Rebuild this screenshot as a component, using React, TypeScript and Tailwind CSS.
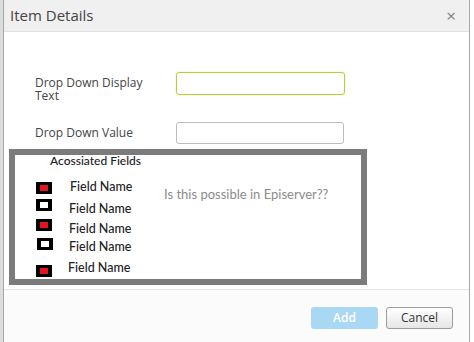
import React from 'react';

interface FieldRow {
  checked: boolean;
  iconTop: string;
  iconLeft: string;
  textTop: string;
  textLeft: string;
}

const rows: FieldRow[] = [
  { checked: true, iconTop: 'mt-[15px]', iconLeft: 'ml-[21px]', textTop: 'mt-[12px]', textLeft: 'ml-[18px]' },
  { checked: false, iconTop: 'mt-[5px]', iconLeft: 'ml-[21px]', textTop: 'mt-[6px]', textLeft: 'ml-[17px]' },
  { checked: true, iconTop: 'mt-[8px]', iconLeft: 'ml-[21px]', textTop: 'mt-[4px]', textLeft: 'ml-[17px]' },
  { checked: false, iconTop: 'mt-[7px]', iconLeft: 'ml-[22px]', textTop: 'mt-[2px]', textLeft: 'ml-[17px]' },
  { checked: true, iconTop: 'mt-[15px]', iconLeft: 'ml-[21px]', textTop: 'mt-[5px]', textLeft: 'ml-[16px]' },
];

function Box({ checked }: { checked: boolean }) {
  return (
    <div className="w-[16px] h-[12px] bg-black flex items-center justify-center">
      <div className={`w-[8px] h-[6px] ${checked ? 'bg-[#e2141e]' : 'bg-white'}`} />
    </div>
  );
}

export default function App() {
  return (
    <div className="w-[474px] h-[342px] flex bg-white overflow-hidden font-['Open_Sans',sans-serif]">
      <div className="w-[3px] bg-[#dcdcdc]" />
      <div className="flex-1 flex flex-col border-l border-r border-[#a8a8a8] bg-white">
        {/* header */}
        <div className="h-[32px] bg-[#f0f0f0] border-b border-[#e3e3e3] flex items-center justify-between pl-[6px] pr-[13px]">
          <span className="text-[15px] text-[#444]">Item Details</span>
          <span className="text-[17px] leading-none text-[#808080]">×</span>
        </div>

        {/* form */}
        <div className="pl-[31px] pt-[40px] text-[12px] text-[#444]">
          <div className="flex items-start">
            <div className="w-[141px] pt-[4px] pr-[30px] leading-[13px]">Drop Down Display Text</div>
            <div className="w-[169px] h-[23px] rounded-[3px] border border-[#b3d132] shadow-[0_0_2px_#e4ee9f]" />
          </div>
          <div className="flex items-center mt-[20px]">
            <div className="w-[141px]">Drop Down Value</div>
            <div className="w-[168px] h-[22px] rounded-[3px] border border-[#bdbdbd]" />
          </div>
        </div>

        {/* mockup box */}
        <div className="ml-[5px] mt-[5px] w-[358px] h-[136px] border-[6px] border-[#7b7b7b] bg-white font-['Lato',sans-serif]">
          <div className="pl-[35px] text-[12px] leading-[12px] font-medium text-[#222]">Acossiated Fields</div>
          <div className="flex items-start">
            <div className="w-[37px] flex flex-col">
              {rows.map((r, i) => (
                <div key={i} className={`${r.iconTop} ${r.iconLeft}`}>
                  <Box checked={r.checked} />
                </div>
              ))}
            </div>
            <div className="w-[112px] flex flex-col">
              {rows.map((r, i) => (
                <div key={i} className={`${r.textTop} ${r.textLeft} text-[12.5px] leading-[16px] font-medium text-[#222]`}>
                  Field Name
                </div>
              ))}
            </div>
            <div className="mt-[19px] text-[13px] leading-[16px] text-[#8c8c8c]">
              Is this possible in Episerver??
            </div>
          </div>
        </div>

        {/* footer */}
        <div className="mt-[4px] flex-1 border-t border-[#e6e6e6] bg-[#fbfbfb] flex justify-end items-start gap-[8px] pt-[17px] pr-[16px]">
          <button className="w-[67px] h-[22px] rounded-[3px] bg-[#a9d8f5] text-white text-[12px] font-semibold">Add</button>
          <button className="w-[67px] h-[22px] rounded-[3px] border border-[#9c9c9c] bg-gradient-to-b from-white to-[#e6e6e6] text-[#333] text-[12px]">Cancel</button>
        </div>
      </div>
      <div className="w-[4px] bg-white" />
    </div>
  );
}
